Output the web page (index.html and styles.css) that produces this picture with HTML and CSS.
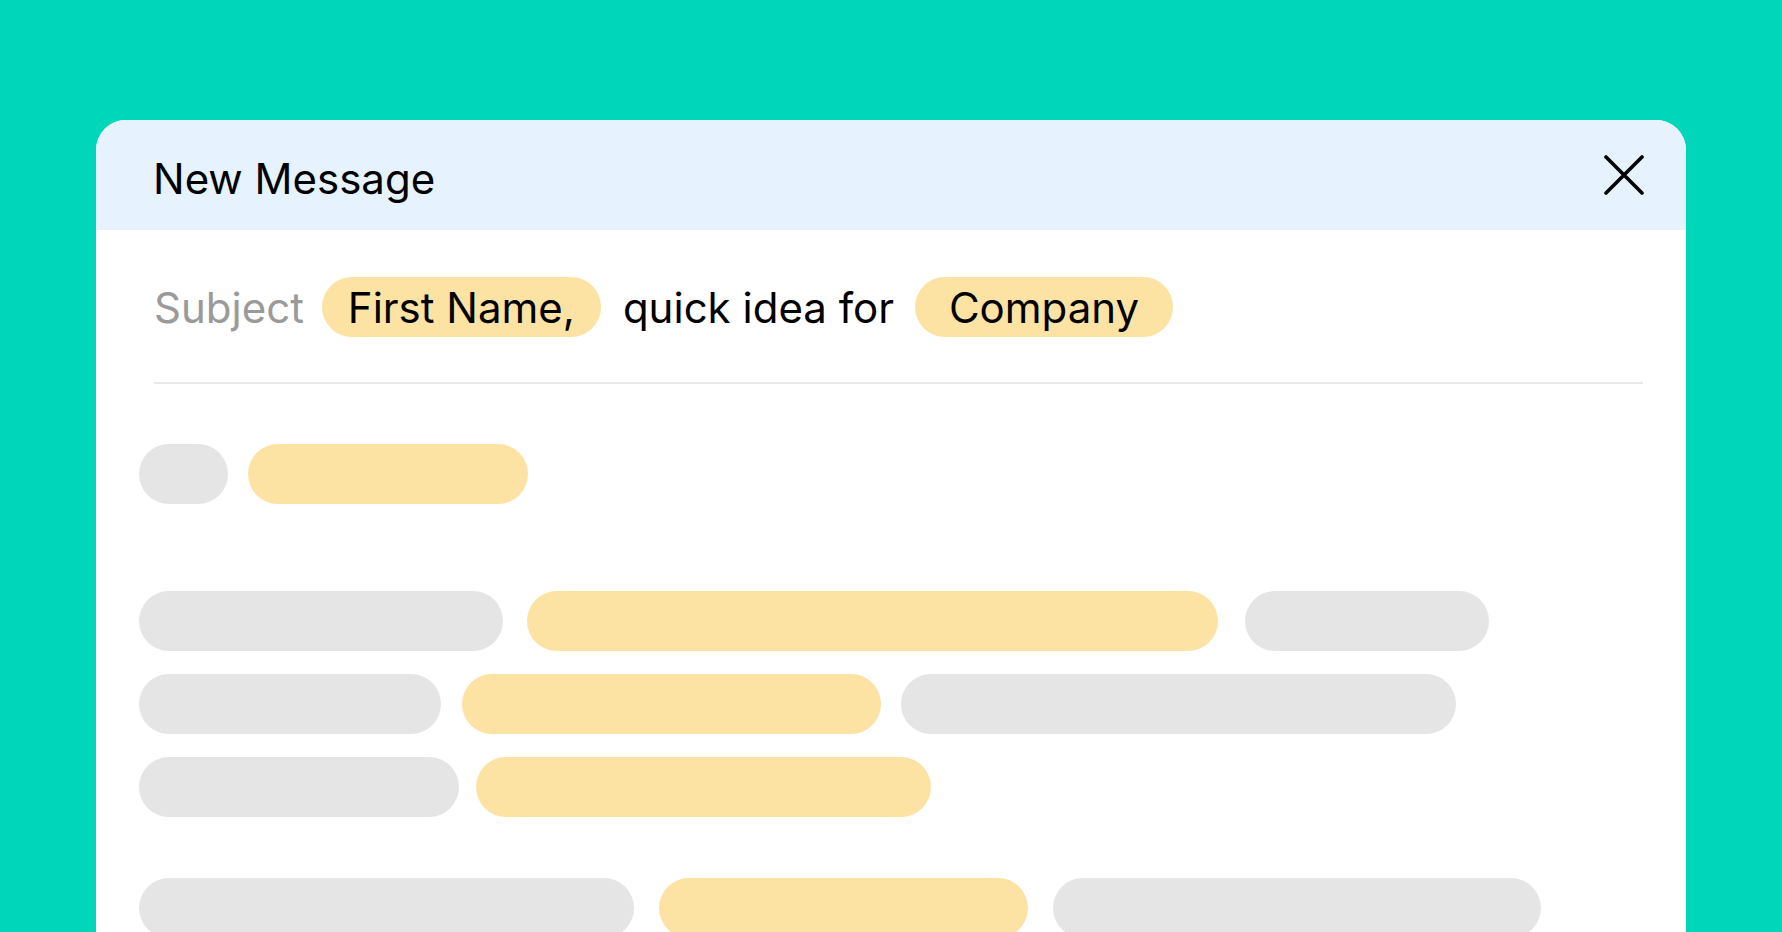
FILE: index.html
```html
<!DOCTYPE html>
<html lang="en">
<head>
<meta charset="utf-8">
<title>New Message</title>
<link rel="stylesheet" href="styles.css">
</head>
<body>
<div class="stage">
  <div class="card">
    <div class="card-header">
      <h1 class="title">New Message</h1>
      <button class="close" aria-label="Close">
        <svg viewBox="0 0 40 40" width="40" height="40"><path d="M2 2 L38 38 M38 2 L2 38" stroke="#000" stroke-width="3.6" stroke-linecap="round" fill="none"/></svg>
      </button>
    </div>
    <div class="card-body">
      <div class="subject-row">
        <span class="subject-label">Subject</span>
        <span class="token token-first">First Name,</span>
        <span class="subject-text">quick idea for</span>
        <span class="token token-company">Company</span>
      </div>
      <div class="divider"></div>
      <div class="lines">
        <div class="line line-greeting">
          <span class="bar gray" style="width:89px"></span>
          <span class="bar yellow" style="width:280px;margin-left:20px"></span>
        </div>
        <div class="paragraph">
          <div class="line">
            <span class="bar gray" style="width:364px"></span>
            <span class="bar yellow" style="width:691px;margin-left:24px"></span>
            <span class="bar gray" style="width:244px;margin-left:27px"></span>
          </div>
          <div class="line">
            <span class="bar gray" style="width:302px"></span>
            <span class="bar yellow" style="width:419px;margin-left:21px"></span>
            <span class="bar gray" style="width:555px;margin-left:20px"></span>
          </div>
          <div class="line">
            <span class="bar gray" style="width:320px"></span>
            <span class="bar yellow" style="width:455px;margin-left:17px"></span>
          </div>
        </div>
        <div class="line line-last">
          <span class="bar gray" style="width:495px"></span>
          <span class="bar yellow" style="width:369px;margin-left:25px"></span>
          <span class="bar gray" style="width:488px;margin-left:25px"></span>
        </div>
      </div>
    </div>
  </div>
</div>
</body>
</html>
```
FILE: styles.css
```css
* { box-sizing: border-box; }
html, body {
  margin: 0;
  padding: 0;
  height: 932px;
  overflow: hidden;
  background: #00d6b9;
  font-family: Inter, "Liberation Sans", sans-serif;
}
.stage {
  padding: 120px 0 0 96px;
  height: 932px;
  overflow: hidden;
}
.card {
  width: 1590px;
  height: 812px;
  background: #ffffff;
  border-radius: 30px 30px 0 0;
  overflow: hidden;
}
.card-header {
  height: 110px;
  background: #e6f2fe;
  display: flex;
  align-items: center;
  justify-content: space-between;
  padding: 0 42px 0 57px;
}
.title {
  margin: 0;
  font-size: 42px;
  font-weight: 400;
  color: #000;
  line-height: 1;
  padding-top: 8px;
}
.close {
  width: 40px;
  height: 40px;
  padding: 0;
  border: 0;
  background: none;
  display: flex;
  align-items: center;
  justify-content: center;
}
.close svg { display: block; }
.card-body {
  padding: 47px 43px 0 43px;
}
.subject-row {
  display: flex;
  align-items: center;
  height: 60px;
  padding-left: 15px;
  font-size: 42px;
}
.subject-label {
  color: #9a9a9a;
  margin-right: 18px;
}
.subject-text {
  color: #000;
  margin: 0 21px 0 22px;
}
.token {
  display: flex;
  align-items: center;
  justify-content: center;
  height: 60px;
  border-radius: 30px;
  background: #fce3a4;
  color: #000;
}
.token-first { width: 279px; }
.token-company { width: 258px; }
.divider {
  height: 2px;
  background: #e9e9e9;
  margin: 45px 0 0 15px;
}
.lines {
  padding-top: 60px;
}
.line {
  display: flex;
  height: 60px;
}
.paragraph {
  margin-top: 87px;
  display: flex;
  flex-direction: column;
  gap: 23px;
}
.line-last {
  margin-top: 61px;
}
.bar {
  display: block;
  height: 60px;
  border-radius: 30px;
  flex: none;
}
.bar.gray { background: #e5e5e5; }
.bar.yellow { background: #fce3a4; }
```
